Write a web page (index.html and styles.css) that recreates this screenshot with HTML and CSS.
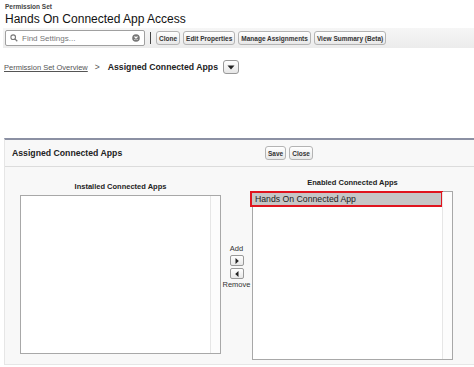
FILE: index.html
```html
<!DOCTYPE html>
<html lang="en">
<head>
    <meta charset="UTF-8">
    <title>Hands On Connected App Access</title>
    <link rel="stylesheet" href="styles.css">
</head>
<body>
    <div class="page-header">
        <div class="page-type">Permission Set</div>
        <h1 class="page-title">Hands On Connected App Access</h1>
    </div>

    <div class="toolbar">
        <div class="search-box">
            <svg class="search-icon" width="8" height="8" viewBox="0 0 8 8"><circle cx="3.2" cy="3.2" r="2.3" fill="none" stroke="#777" stroke-width="1.1"/><line x1="4.9" y1="4.9" x2="7.3" y2="7.3" stroke="#777" stroke-width="1.3"/></svg>
            <span class="search-text">Find Settings...</span>
            <svg class="clear-icon" width="8" height="8" viewBox="0 0 8 8"><circle cx="4" cy="4" r="3.8" fill="#777"/><path d="M2.5 2.5 L5.5 5.5 M5.5 2.5 L2.5 5.5" stroke="#fff" stroke-width="1.1"/></svg>
        </div>
        <span class="divider"></span>
        <button class="btn">Clone</button>
        <button class="btn">Edit Properties</button>
        <button class="btn">Manage Assignments</button>
        <button class="btn">View Summary (Beta)</button>
    </div>

    <div class="breadcrumb">
        <a class="crumb-link">Permission Set Overview</a>
        <span class="crumb-sep">&gt;</span>
        <span class="crumb-current">Assigned Connected Apps</span>
        <button class="crumb-menu"><svg width="8" height="5" viewBox="0 0 8 5"><path d="M0.5 0.5 L7.5 0.5 L4 4.5 Z" fill="#222"/></svg></button>
    </div>

    <div class="panel">
        <div class="panel-header">
            <div class="panel-title">Assigned Connected Apps</div>
            <div class="panel-buttons">
                <button class="btn">Save</button>
                <button class="btn">Close</button>
            </div>
        </div>
        <div class="panel-body">
            <div class="list-col installed">
                <div class="list-label">Installed Connected Apps</div>
                <div class="listbox">
                    <div class="list-items"></div>
                    <div class="track"></div>
                </div>
            </div>
            <div class="move-col">
                <span class="move-label">Add</span>
                <button class="arrow-btn"><svg width="4" height="6" viewBox="0 0 4 6"><path d="M0.5 0 L3.8 3 L0.5 6 Z" fill="#222"/></svg></button>
                <button class="arrow-btn"><svg width="4" height="6" viewBox="0 0 4 6"><path d="M3.5 0 L0.2 3 L3.5 6 Z" fill="#222"/></svg></button>
                <span class="move-label">Remove</span>
            </div>
            <div class="list-col enabled">
                <div class="list-label">Enabled Connected Apps</div>
                <div class="listbox">
                    <div class="list-items">
                        <div class="option selected">Hands On Connected App</div>
                    </div>
                    <div class="track"></div>
                </div>
            </div>
        </div>
    </div>
</body>
</html>
```

FILE: styles.css
```css
*{
	box-sizing: border-box;
}
body{
	margin: 0;
	font-family: 'Liberation Sans', Arial, sans-serif;
	color: #222;
	background: #fff;
}
.page-header{
	padding: 3px 5px 0px;
}
.page-type{
	font-size: 6.5px;
	font-weight: bold;
	color: #444;
	line-height: 8px;
}
.page-title{
	margin: 0;
	font-size: 12px;
	font-weight: normal;
	line-height: 17px;
	color: #111;
}
.toolbar{
	display: flex;
	align-items: center;
	gap: 3px;
	margin: 0px 0px 0px 3px;
	padding: 2px 2px;
	background: linear-gradient(#f6f6f6, #ececec);
}
.search-box{
	display: flex;
	align-items: center;
	width: 140px;
	height: 16px;
	padding: 0px 4px;
	border: 1px solid #a0a0a0;
	border-radius: 2px;
	background: #fff;
}
.search-icon{
	margin-right: 4px;
}
.search-text{
	flex: 1;
	font-size: 8px;
	color: #777;
}
.divider{
	width: 1px;
	height: 12px;
	margin: 0px 2px;
	background: #444;
}
.btn{
	font-family: inherit;
	font-size: 6.5px;
	font-weight: bold;
	color: #333;
	height: 14px;
	padding: 0px 2px;
	border: 1px solid #b4b4b4;
	border-radius: 3px;
	background: linear-gradient(#ffffff, #e8e8e8);
}
.breadcrumb{
	display: flex;
	align-items: center;
	margin: 11px 0px 0px 4px;
	height: 16px;
}
.crumb-link{
	font-size: 7.5px;
	color: #555;
	text-decoration: underline;
}
.crumb-sep{
	font-size: 8.5px;
	color: #555;
	margin: 0px 8px 0px 7px;
}
.crumb-current{
	font-size: 8.7px;
	font-weight: bold;
	color: #222;
}
.crumb-menu{
	display: flex;
	align-items: center;
	justify-content: center;
	width: 16px;
	height: 14px;
	margin-left: 5px;
	padding: 0;
	border: 1px solid #999;
	border-radius: 3px;
	background: linear-gradient(#ffffff, #e6e6e6);
}
.panel{
	margin: 63px 0px 0px 4px;
	border-top: 2px solid #8b90a3;
	border-left: 1px solid #e6e6e6;
	border-bottom: 1px solid #e6e6e6;
	background: #f8f8f8;
}
.panel-header{
	display: flex;
	align-items: center;
	height: 27px;
	border-bottom: 1px solid #dcdcdc;
}
.panel-title{
	width: 260px;
	padding-left: 7px;
	font-size: 8.7px;
	font-weight: bold;
	color: #222;
}
.panel-buttons{
	display: flex;
	gap: 3px;
}
.panel-body{
	display: flex;
	padding-left: 15px;
	padding-bottom: 4px;
}
.list-col{
	display: flex;
	flex-direction: column;
	align-items: center;
	width: 201px;
}
.installed{
	padding-top: 15px;
}
.enabled{
	padding-top: 11px;
}
.list-label{
	font-size: 7.5px;
	font-weight: bold;
	color: #222;
	margin-bottom: 4px;
}
.installed .listbox{
	height: 159px;
}
.enabled .listbox{
	height: 169px;
}
.listbox{
	display: flex;
	width: 201px;
	border: 1px solid #a8a8a8;
	background: #fff;
}
.list-items{
	flex: 1;
}
.track{
	width: 10px;
	border-left: 1px solid #e6e6e6;
	background: #fcfcfc;
}
.option{
	font-size: 8.7px;
	color: #222;
	height: 14px;
	line-height: 14px;
	padding-left: 2px;
}
.selected{
	background: #c6c6c6;
	outline: 2px solid #e0141e;
	outline-offset: -1px;
	margin-left: -2px;
	padding-left: 4px;
}
.move-col{
	display: flex;
	flex-direction: column;
	align-items: center;
	width: 31px;
	padding-top: 77px;
}
.move-label{
	font-size: 7.5px;
	color: #333;
	line-height: 10px;
}
.arrow-btn{
	display: flex;
	align-items: center;
	justify-content: center;
	width: 14px;
	height: 11px;
	margin: 1px 0px;
	padding: 0;
	border: 1px solid #999;
	border-radius: 2px;
	background: linear-gradient(#ffffff, #e8e8e8);
}
```
